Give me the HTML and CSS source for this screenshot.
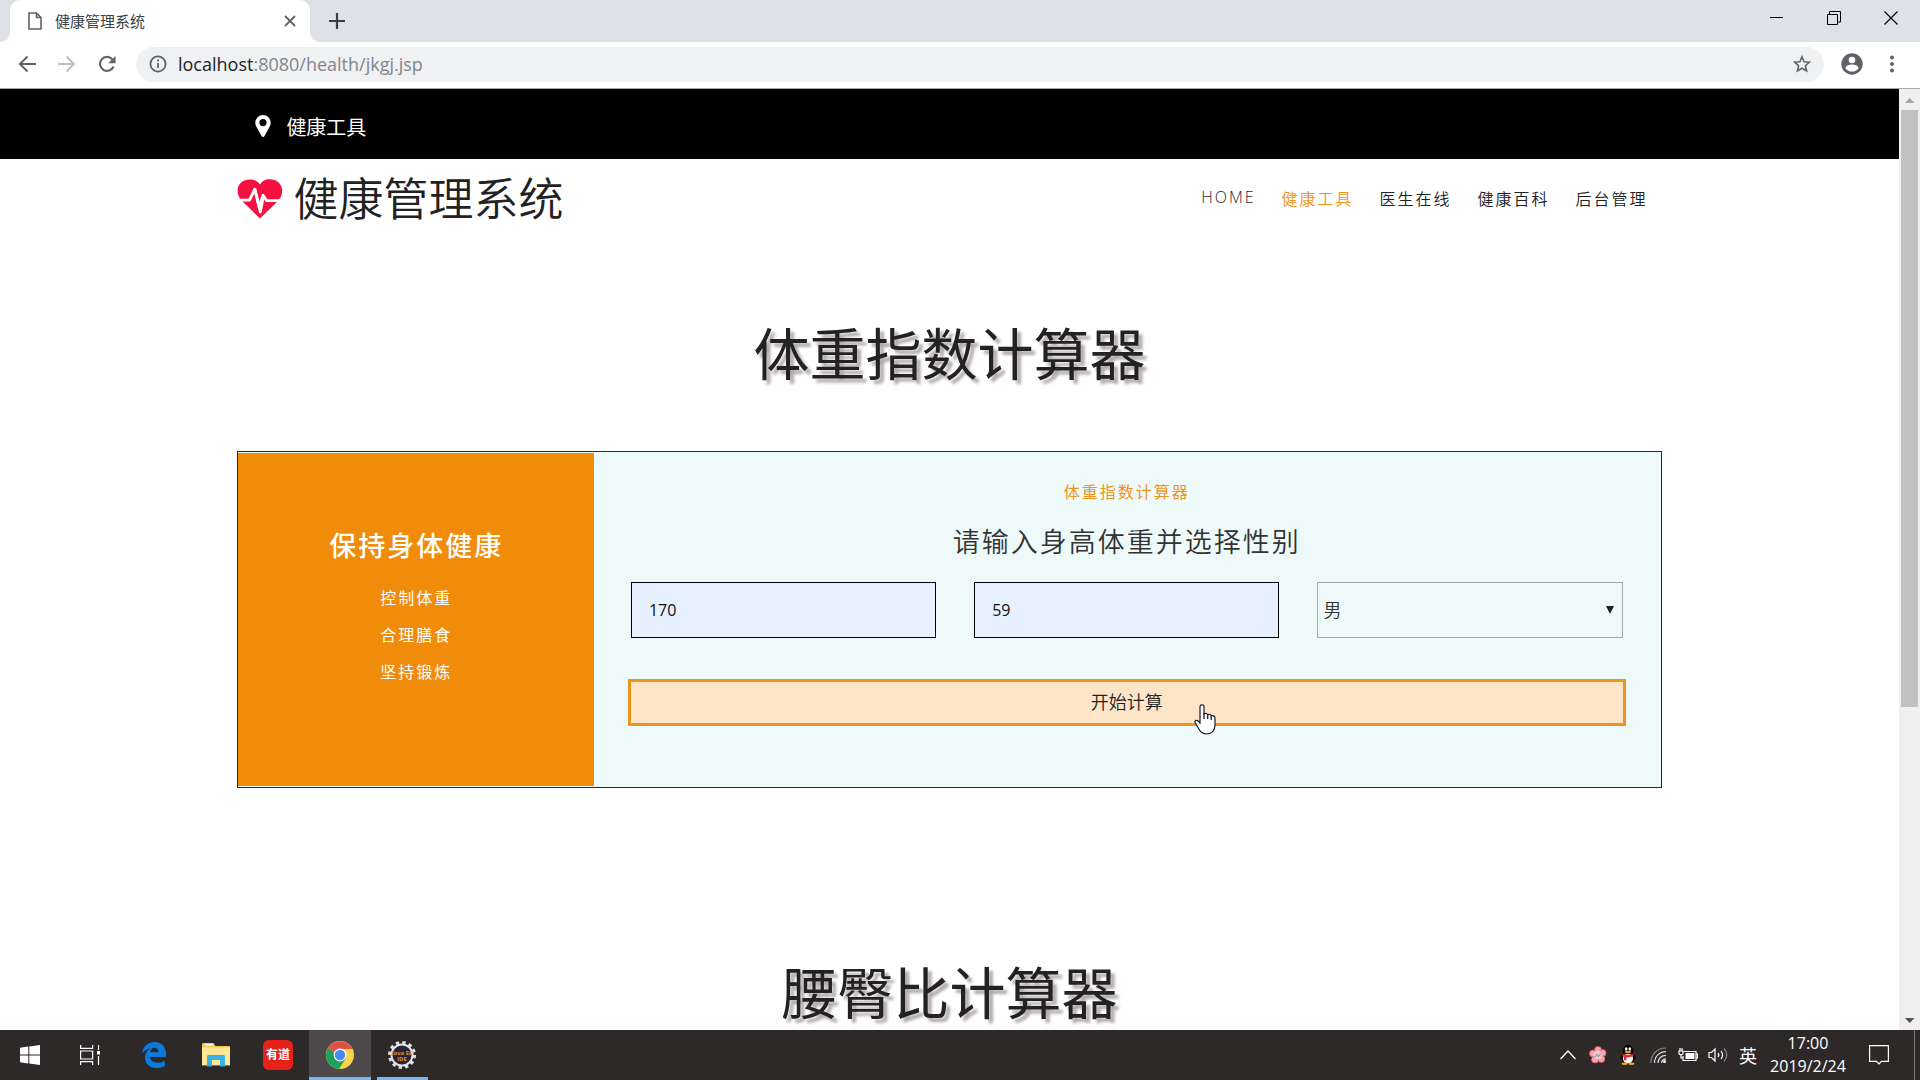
FILE: index.html
```html
<!DOCTYPE html>
<html lang="zh-CN">
<head>
<meta charset="utf-8">
<title>健康管理系统</title>
<link rel="stylesheet" href="styles.css">
</head>
<body>
<div class="tabstrip">
  <div class="tab">
    <svg class="tab-icon" width="14" height="18" viewBox="0 0 14 18" fill="none" stroke="#5f6368" stroke-width="1.6"><path d="M1 1h7.500l4.500 4.500V17H1zM8.500 1v4.500H13"/></svg>
    <span class="tab-title">健康管理系统</span>
    <button class="plain" aria-label="关闭标签页"><svg width="12" height="12" viewBox="0 0 12 12" stroke="#5f6368" stroke-width="1.800"><path d="M1 1l10 10M11 1L1 11"/></svg></button>
  </div>
  <button class="plain new-tab" aria-label="新标签页"><svg width="16" height="16" viewBox="0 0 16 16" stroke="#3c4043" stroke-width="2.200"><path d="M8 0v16M0 8h16"/></svg></button>
  <div class="window-controls">
    <button class="plain" aria-label="最小化"><svg width="14" height="14" viewBox="0 0 14 14" stroke="#000"><path d="M0 6.500h13"/></svg></button>
    <button class="plain" aria-label="还原"><svg width="14" height="14" viewBox="0 0 14 14" fill="none" stroke="#000"><path d="M.5 3.500h10v10H.5zM2.500 3.500v-3h11v10.500h-3"/></svg></button>
    <button class="plain" aria-label="关闭"><svg width="14" height="14" viewBox="0 0 14 14" stroke="#000" stroke-width="1.200"><path d="M.5 .5l13 13M13.500 .5l-13 13"/></svg></button>
  </div>
</div>
<div class="toolbar">
  <div class="nav-buttons">
    <button class="plain" aria-label="后退"><svg width="18" height="18" viewBox="0 0 18 18" fill="none" stroke="#5f6368" stroke-width="2"><path d="M18 9H2M9.500 1.500L2 9l7.500 7.500"/></svg></button>
    <button class="plain" aria-label="前进"><svg width="18" height="18" viewBox="0 0 18 18" fill="none" stroke="#bdbfc2" stroke-width="2"><path d="M0 9h16M8.500 1.500L16 9l-7.500 7.500"/></svg></button>
    <button class="plain" aria-label="刷新"><svg width="18" height="18" viewBox="0 0 18 18"><path d="M15.500 11.500A7 7 0 1 1 14.300 4.300" fill="none" stroke="#5f6368" stroke-width="2.100"/><path d="M17.500 1v7.300h-7.300z" fill="#5f6368"/></svg></button>
  </div>
  <div class="omnibox">
    <svg width="18" height="18" viewBox="0 0 18 18" fill="none" stroke="#5f6368" stroke-width="1.800"><circle cx="9" cy="9" r="7.600"/><path d="M9 8v5M9 4.500v2"/></svg>
    <span class="url"><b>localhost</b>:8080/health/jkgj.jsp</span>
    <svg width="18" height="18" viewBox="0 0 18 18" fill="none" stroke="#5f6368" stroke-width="1.600"><path d="M9 1.800l2.100 4.900 5.300.5-4 3.500 1.200 5.200L9 13.200l-4.600 2.700 1.200-5.200-4-3.500 5.300-.5z"/></svg>
  </div>
  <svg class="profile" width="22" height="22" viewBox="0 0 22 22"><circle cx="11" cy="11" r="10.700" fill="#5f6368"/><circle cx="11" cy="7" r="3.300" fill="#fff"/><path d="M4.500 15.200c0-2.500 4.300-3.600 6.500-3.600s6.500 1.100 6.500 3.600a8 8 0 0 1-13 0z" fill="#fff"/></svg>
  <svg class="dots" width="6" height="18" viewBox="0 0 6 18" fill="#5f6368"><circle cx="3" cy="2.500" r="2"/><circle cx="3" cy="9" r="2"/><circle cx="3" cy="15.500" r="2"/></svg>
</div>
<div class="viewport">
  <div class="page">
    <div class="topbar">
      <div class="container topbar-row">
        <svg width="16" height="22" viewBox="0 0 16 22"><path d="M8 0a7.700 7.700 0 0 1 7.700 7.700c0 2-.8 3.300-1.500 4.700L9.500 21c-.6 1.300-2.400 1.300-3 0L1.800 12.400C1.100 11 .3 9.700.3 7.700A7.700 7.700 0 0 1 8 0zm0 4a3.600 3.600 0 1 0 0 7.200A3.600 3.600 0 0 0 8 4z" fill="#fff"/></svg>
        <span>健康工具</span>
      </div>
    </div>
    <header class="container header">
      <a class="brand" href="#home">
        <svg width="46" height="40" viewBox="0 0 46 40"><path d="M23 39.500L4.500 21.500C-2 14 0 4 8 1.300 14-.7 20 1 23 5.500 26-.2 33-.8 38 1.300c8 3.200 9.500 12.700 3.500 20.200z" fill="#f5103f"/><path d="M0 21.200h12.500l5.300-11 4.300 17.500 4-11.500 3.500 5.500H46" fill="none" stroke="#fff" stroke-width="2.800" stroke-linejoin="round"/><path d="M17.800 10l5.500 23 3.200-16" fill="none" stroke="#fff" stroke-width="2.800" stroke-linejoin="round"/></svg>
        <span>健康管理系统</span>
      </a>
      <nav class="menu">
        <a href="#home">HOME</a>
        <a href="#tools" class="active">健康工具</a>
        <a href="#doctors">医生在线</a>
        <a href="#wiki">健康百科</a>
        <a href="#admin">后台管理</a>
      </nav>
    </header>
    <section class="container tool" id="tools">
      <h1>体重指数计算器</h1>
      <div class="card">
        <aside class="tips">
          <h2>保持身体健康</h2>
          <ul>
            <li>控制体重</li>
            <li>合理膳食</li>
            <li>坚持锻炼</li>
          </ul>
        </aside>
        <form class="calc">
          <h3>体重指数计算器</h3>
          <p>请输入身高体重并选择性别</p>
          <div class="fields">
            <input type="text" value="170" aria-label="身高">
            <input type="text" value="59" aria-label="体重">
            <div class="select-box">
              <select aria-label="性别"><option>男</option><option>女</option></select>
              <svg width="8" height="8" viewBox="0 0 8 8"><path d="M0 0h8L4 8z" fill="#222"/></svg>
            </div>
          </div>
          <div class="submit-row">
            <button type="button" class="submit">开始计算</button>
            <svg class="pointer" width="22" height="31" viewBox="0 0 22 31"><path d="M6 2.500C6 .3 10 .3 10 2.500V9.800c1-.7 3.300-.4 3.700.9 1-.6 3-.2 3.500 1.100 1.300-.6 3.800 0 3.800 2.200V21c0 5.500-3.500 9-8.500 9-4 0-6-2-7.500-4.700L1.300 19c-1-2.200 1.300-3.600 2.800-2L6 19z" fill="#fff" stroke="#1b1b2b" stroke-width="1.200"/><path d="M10 9v6M13.700 10.500V15M17.200 11.500V16" stroke="#1b1b2b" stroke-width="1.300"/></svg>
          </div>
        </form>
      </div>
    </section>
    <section class="container tool">
      <h1>腰臀比计算器</h1>
    </section>
  </div>
  <div class="scrollbar">
    <svg width="21" height="21" viewBox="0 0 21 21"><path d="M6 14h9.500L10.700 9z" fill="#a3a3a3"/></svg>
    <div class="track"><div class="thumb"></div></div>
    <svg width="21" height="21" viewBox="0 0 21 21"><path d="M6 9h9.500l-4.800 5z" fill="#505050"/></svg>
  </div>
</div>
<footer class="taskbar">
  <div class="apps">
    <button class="plain sys" aria-label="开始"><svg width="20" height="20" viewBox="0 0 20 20" fill="#fff"><path d="M0 2.800L8.300 1.600v7.900H0zM9.300 1.500L20 0v9.500H9.300zM0 10.500h8.300v7.900L0 17.200zM9.300 10.500H20V20L9.300 18.500z"/></svg></button>
    <button class="plain sys" aria-label="任务视图"><svg width="20" height="20" viewBox="0 0 20 20" fill="none" stroke="#fff" stroke-width="1.200"><path d="M.6 0v3.400h12V0M.6 20v-3.400h12V20M.6 6h12v8H.6zM18.500 0v5M18.500 11v9"/><path d="M17 6h3v3.500h-3z" fill="#fff" stroke="none"/></svg></button>
    <button class="plain app first" aria-label="Edge"><svg width="24" height="26" viewBox="0 0 24 26"><path d="M0 11.500C1 4 6.500 0 12.500 0 20 0 24 5.500 24 11.500V15H8c.3 4 3.800 5.700 7.500 5.700 2.800 0 5.200-.8 7.300-2v5.200C20.500 25.300 17.500 26 14.500 26 7.500 26 3 21.800 3 15.500 3 11.300 5.500 8 9 6.300 5 6.800 2 8.700 0 11.500zM8.200 10.300h8.300c0-3-1.500-4.600-4-4.600s-4 1.900-4.300 4.600z" fill="#0a7bdc"/></svg></button>
    <button class="plain app" aria-label="文件资源管理器"><svg width="28" height="24" viewBox="0 0 28 24"><path d="M0 1.500C0 .7.600 0 1.400 0h10l2 3H27c.6 0 1 .4 1 1v18.500H0z" fill="#f3c955"/><path d="M0 4.500h28V22H0z" fill="#ffe694"/><path d="M3 1h8v1.500H3z" fill="#fff7d8"/><path d="M5 23.500V13.500C5 12.700 5.700 12 6.500 12h15c.8 0 1.500.7 1.500 1.500v10h-5V17h-8v6.500z" fill="#37b3e8"/></svg></button>
    <button class="plain app" aria-label="有道词典"><span class="youdao">有道</span></button>
    <button class="plain app current" aria-label="Chrome"><svg width="28" height="28" viewBox="0 0 28 28"><circle cx="14" cy="14" r="14" fill="#fbd248"/><path d="M14 14L1.900 7A14 14 0 0 0 13 28l7-11z" fill="#1fa15d"/><path d="M14 14L1.900 7A14 14 0 0 1 26.500 8H14z" fill="#de5246"/><circle cx="14" cy="14" r="6.400" fill="#fff"/><circle cx="14" cy="14" r="5.200" fill="#4a8af4"/></svg></button>
    <button class="plain app running" aria-label="Java EE IDE"><svg width="28" height="28" viewBox="0 0 28 28"><circle cx="14" cy="14" r="12.400" fill="none" stroke="#dfe3e6" stroke-width="3.200" stroke-dasharray="3.245 3.245"/><circle cx="14" cy="14" r="10.500" fill="#292433" stroke="#dfe3e6" stroke-width="2"/><text x="14" y="14" class="ide">Java EE</text><text x="14" y="20" class="ide">IDE</text></svg></button>
  </div>
  <div class="tray">
    <span class="tray-item"><svg width="16" height="10" viewBox="0 0 16 10" fill="none" stroke="#fff" stroke-width="1.300"><path d="M.5 9L8 1l7.500 8"/></svg></span>
    <span class="tray-item"><svg width="18" height="18" viewBox="0 0 18 18"><g fill="#f7a3ac" stroke="#d6505e" stroke-width=".7"><circle cx="9" cy="4" r="3.500"/><circle cx="13.600" cy="7" r="3.500"/><circle cx="12.400" cy="13" r="3.500"/><circle cx="6" cy="13.500" r="3.500"/><circle cx="4" cy="7.500" r="3.500"/></g><circle cx="9" cy="9" r="4.500" fill="#f9c2c8"/><path d="M5.500 10.500c2 1 2-4 3-2s0 3 1.500 1.500 1-2 2.500-3" fill="none" stroke="#5c8fbd"/></svg></span>
    <span class="tray-item"><svg width="16" height="20" viewBox="0 0 16 20"><path d="M3 8C2 2.500 5 0 8 0s6 2.500 5 8c1.500 2 3 4.500 2.600 6.500-1 .2-1.600-.8-1.600-.8 0 2-.8 3-1.500 3.800H3.500C2.500 16.500 2 15.500 2 13.700c0 0-.8 1-1.600.8C0 12.500 1.500 10 3 8z" fill="#080808"/><ellipse cx="8" cy="13.500" rx="5" ry="4.800" fill="#fff"/><path d="M2.500 8.500c3 1.800 8 1.800 11 0v2.300c-2.500 1.300-5 1.600-7 1.400v3H4v-3.500l-1.500-.8z" fill="#e52b2d"/><ellipse cx="6.200" cy="4" rx="1.300" ry="1.700" fill="#fff"/><ellipse cx="9.800" cy="4" rx="1.300" ry="1.700" fill="#fff"/><ellipse cx="8" cy="7" rx="3.300" ry="1" fill="#f7a71b"/><ellipse cx="4.500" cy="18.700" rx="3" ry="1.200" fill="#f7a71b"/><ellipse cx="11.500" cy="18.700" rx="3" ry="1.200" fill="#f7a71b"/></svg></span>
    <span class="tray-item"><svg width="16" height="16" viewBox="0 0 16 16" fill="none" stroke="#ddd" stroke-width="1.200"><path d="M.8 16C.8 7.500 7 1 16 1" stroke="#888"/><path d="M4.500 16C4.500 9.500 9.500 4.700 16 4.700M8 16c0-4.500 3.500-7.700 8-7.700M11.500 16c0-2.500 2-4.200 4.500-4.200"/><circle cx="14.500" cy="14.500" r="1.500" fill="#fff" stroke="none"/></svg></span>
    <span class="tray-item"><svg width="20" height="14" viewBox="0 0 20 14" fill="none" stroke="#fff" stroke-width="1.200"><path d="M6 3.500h12v9H5V8M18.500 6h1v4h-1"/><path d="M7.500 5h9v6H7.500z" fill="#fff" stroke="none"/><path d="M1 3h4v2.500C5 7 1 7 1 5.500zM2 0v3M4 0v3M3 7v3h2"/></svg></span>
    <span class="tray-item"><svg width="20" height="16" viewBox="0 0 20 16" fill="none" stroke="#fff" stroke-width="1.200"><path d="M1 5.500h2.500L7 2v12l-3.500-3.500H1z"/><path d="M10 6c1 1.200 1 2.800 0 4M13 4c2 2.500 2 5.500 0 8"/><path d="M16 1.500c3.500 4 3.500 9 0 13" stroke="#888"/></svg></span>
    <span class="tray-item ime">英</span>
    <span class="clock"><span>17:00</span><span>2019/2/24</span></span>
    <span class="notice"><svg width="20" height="20" viewBox="0 0 20 20" fill="none" stroke="#fff" stroke-width="1.200"><path d="M.6.6h18.800v15.800H12.500L10 19l-2.500-2.600H.6z"/></svg></span>
    <span class="show-desktop"></span>
  </div>
</footer>
</body>
</html>
```

FILE: styles.css
```css
* {
  box-sizing: border-box;
}

body {
  margin: 0;
  height: 100vh;
  display: flex;
  flex-direction: column;
  overflow: hidden;
  background: #fff;
  color: #222;
  font-family: "Open Sans", "Noto Sans CJK SC", sans-serif;
  font-size: 16px;
}

svg {
  display: block;
  flex: none;
}

h1, h2, h3, p, ul {
  margin: 0;
  padding: 0;
  font-weight: 400;
}

a {
  color: inherit;
  text-decoration: none;
}

.plain {
  display: flex;
  align-items: center;
  justify-content: center;
  padding: 0;
  border: 0;
  background: none;
  font: inherit;
}

/* browser frame */
.tabstrip {
  flex: none;
  display: flex;
  align-items: stretch;
  height: 42px;
  padding: 0 1px 0 10px;
  background: #dee1e6;
}

.tab {
  position: relative;
  display: flex;
  align-items: center;
  width: 300px;
  padding: 0 14px 0 18px;
  border-radius: 10px 10px 0 0;
  background: #fff;
}

.tab::before,
.tab::after {
  content: "";
  position: absolute;
  bottom: 0;
  width: 10px;
  height: 10px;
}

.tab::before {
  right: 100%;
  background: radial-gradient(circle at 0 0, transparent 10px, #fff 10px);
}

.tab::after {
  left: 100%;
  background: radial-gradient(circle at 100% 0, transparent 10px, #fff 10px);
}

.tab-title {
  flex: 1;
  margin-left: 13px;
  color: #3c4043;
  font-size: 15px;
  line-height: 20px;
}

.new-tab {
  width: 54px;
}

.window-controls {
  display: flex;
  margin-left: auto;
  padding-bottom: 6px;
}

.window-controls .plain {
  width: 57px;
}

.toolbar {
  flex: none;
  display: flex;
  align-items: center;
  height: 47px;
  padding: 0 25px 2px 18px;
  border-bottom: 1px solid #a9a9a9;
}

.nav-buttons {
  display: flex;
  gap: 22px;
}

.omnibox {
  flex: 1;
  display: flex;
  align-items: center;
  height: 35px;
  margin: 0 17px 0 20px;
  padding: 0 13px;
  border-radius: 18px;
  background: #f0f1f3;
}

.url {
  flex: 1;
  margin-left: 11px;
  color: #80868b;
  font-size: 18px;
  line-height: 24px;
}

.url b {
  color: #202124;
  font-weight: 400;
}

.dots {
  margin-left: 26px;
}

.viewport {
  flex: 1;
  min-height: 0;
  display: flex;
}

.page {
  flex: 1;
  overflow: hidden;
}

.scrollbar {
  display: flex;
  flex-direction: column;
  width: 21px;
  background: #f0f0f0;
}

.track {
  flex: 1;
  padding: 0 2px;
}

.thumb {
  height: 66.4%;
  background: #c1c1c1;
}

/* site */
.container {
  width: 75%;
  margin: 0 auto;
}

.topbar {
  background: #000;
  color: #fff;
}

.topbar-row {
  display: flex;
  align-items: center;
  gap: 15px;
  height: 70px;
  padding: 4px 0 0 18px;
  font-size: 20px;
}

.header {
  display: flex;
  align-items: center;
  justify-content: space-between;
  height: 80px;
}

.brand {
  display: flex;
  align-items: center;
  gap: 10px;
  font-size: 45px;
  font-weight: 350;
  line-height: 80px;
}

.menu {
  display: flex;
  gap: 26px;
  padding: 0 14px 2px 0;
  font-weight: 350;
  letter-spacing: 2px;
}

.menu .active {
  color: #f0941c;
}

.tool {
  padding: 74px 0 90px;
}

.tool h1 {
  font-size: 56px;
  line-height: 80px;
  text-align: center;
  text-shadow: 4px 4px 3px rgba(60, 40, 40, 0.4);
}

.card {
  display: grid;
  grid-template-columns: 1fr 3fr;
  margin-top: 58px;
  padding: 1px 0;
  border: 1px solid #222c2e;
  background: #eefafa;
}

.tips {
  padding-top: 73px;
  background: #f08c0a;
  color: #fff;
  font-weight: 500;
  letter-spacing: 2px;
  text-align: center;
}

.tips h2 {
  margin-bottom: 14px;
  font-size: 27px;
  font-weight: 500;
  line-height: 40px;
}

.tips ul {
  list-style: none;
  line-height: 37px;
}

.calc {
  padding: 27px 38px 60px 37px;
}

.calc h3 {
  color: #f0941c;
  font-size: 16px;
  letter-spacing: 2px;
  line-height: 24px;
  text-align: center;
}

.calc p {
  margin: 18px 0 20px;
  color: #333;
  font-size: 27px;
  font-weight: 350;
  letter-spacing: 2px;
  line-height: 40px;
  text-align: center;
}

.fields {
  display: grid;
  grid-template-columns: repeat(3, 1fr);
  gap: 38px;
}

.fields input,
.fields select {
  width: 100%;
  height: 56px;
  padding: 0 17px;
  border: 1px solid #000;
  border-radius: 0;
  background: #e6f0fe;
  color: #111;
  font: inherit;
}

.fields select {
  appearance: none;
  padding: 0 5px;
  border-color: #a0aaaa;
  background: transparent;
  color: #333;
  font-size: 18px;
  font-weight: 350;
}

.select-box {
  position: relative;
}

.select-box svg {
  position: absolute;
  top: 24px;
  right: 9px;
}

.submit-row {
  position: relative;
  margin: 41px -3px 0;
}

.submit {
  display: block;
  width: 100%;
  height: 47px;
  padding: 0 0 3px;
  border: 3px solid #ee951c;
  background: #fee5c8;
  color: #222;
  font: inherit;
  font-size: 18px;
  font-weight: 350;
}

.pointer {
  position: absolute;
  top: 25px;
  left: calc(50% + 67px);
}

/* taskbar */
.taskbar {
  flex: none;
  display: flex;
  justify-content: space-between;
  height: 50px;
  background: #2d2929;
  color: #fff;
}

.apps,
.tray {
  display: flex;
  align-items: stretch;
}

.sys {
  width: 60px;
}

.app {
  width: 62px;
}

.first {
  margin-left: 3px;
}

.current {
  background: #4e4a4c;
  box-shadow: inset 0 -3px #7cb5ea;
}

.running {
  background: linear-gradient(#7cb5ea, #7cb5ea) center bottom / 51px 3px no-repeat;
}

.youdao {
  width: 30px;
  border-radius: 6px;
  background: #e62117;
  color: #fff;
  font-size: 12px;
  font-weight: 700;
  line-height: 30px;
  text-align: center;
}

.ide {
  fill: #e08a35;
  font-size: 6px;
  font-weight: 700;
  text-anchor: middle;
}

.tray-item {
  display: flex;
  align-items: center;
  justify-content: center;
  width: 30px;
}

.ime {
  font-size: 18px;
}

.clock {
  display: flex;
  flex-direction: column;
  justify-content: center;
  width: 90px;
  font-size: 16px;
  line-height: 23px;
  text-align: center;
}

.notice {
  display: flex;
  align-items: center;
  justify-content: center;
  width: 52px;
}

.show-desktop {
  width: 6px;
  margin-left: 9px;
  border-left: 1px solid #7d7a7a;
}
```
